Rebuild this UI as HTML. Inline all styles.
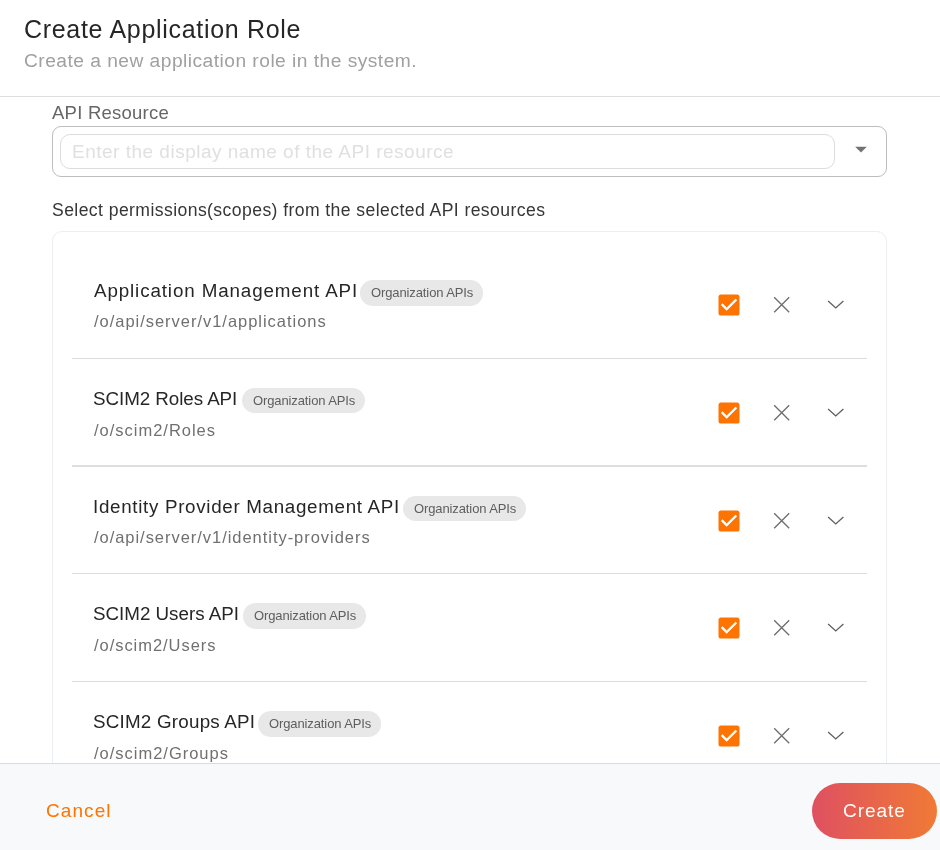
<!DOCTYPE html>
<html><head><meta charset="utf-8"><style>
html,body{margin:0;padding:0;background:#fff;width:940px;height:850px;overflow:hidden;}
body{position:relative;font-family:"Liberation Sans",sans-serif;}
.t{position:absolute;white-space:nowrap;line-height:1;will-change:transform;}
.abs{position:absolute;}
</style></head><body>
<div class="t" style="left:24.10px;top:17.35px;font-size:25.0px;letter-spacing:0.691px;color:#262626">Create Application Role</div>
<div class="t" style="left:23.50px;top:50.70px;font-size:19.2px;letter-spacing:0.474px;color:#a0a0a0">Create a new application role in the system.</div>
<div class="abs" style="left:0;top:96px;width:940px;height:1px;background:#dedede"></div>
<div class="t" style="left:52.30px;top:103.83px;font-size:18.5px;letter-spacing:0.236px;color:#666666">API Resource</div>
<div class="abs" style="left:52px;top:126px;width:833px;height:49px;border:1px solid #bdbdbd;border-radius:9px"></div>
<div class="abs" style="left:60px;top:134px;width:773px;height:33px;border:1px solid #dcdcdc;border-radius:10px"></div>
<div class="t" style="left:71.90px;top:142.00px;font-size:19.0px;letter-spacing:0.498px;color:#e0e0e0">Enter the display name of the API resource</div>
<svg class="abs" style="left:847px;top:135px" width="28" height="28" viewBox="0 0 24 24"><path d="M7 10l5 5 5-5z" fill="#737373"/></svg>
<div class="t" style="left:51.70px;top:202.20px;font-size:17.6px;letter-spacing:0.414px;color:#363636">Select permissions(scopes) from the selected API resources</div>
<div class="abs" style="left:52px;top:231px;width:833px;height:700px;border:1px solid #eceef0;border-radius:10px"></div>
<div class="abs" style="left:72px;top:358px;width:795px;height:1px;background:#dcdcdc"></div>
<div class="abs" style="left:72px;top:465px;width:795px;height:2px;background:#dedede"></div>
<div class="abs" style="left:72px;top:573px;width:795px;height:1px;background:#dcdcdc"></div>
<div class="abs" style="left:72px;top:681px;width:795px;height:1px;background:#dcdcdc"></div>
<div class="t" style="left:93.50px;top:281.92px;font-size:18.8px;letter-spacing:0.880px;color:#262626">Application Management API</div>
<div class="t" style="left:94.10px;top:313.00px;font-size:16.5px;letter-spacing:0.971px;color:#707070">/o/api/server/v1/applications</div>
<div class="abs" style="left:360px;top:280.20px;width:123px;height:25.5px;border-radius:12.75px;background:#e8e8e8"></div>
<div class="t" style="left:370.70px;top:286.05px;font-size:13.0px;letter-spacing:-0.112px;color:#5e5e5e">Organization APIs</div>
<svg class="abs" style="left:715px;top:290.50px" width="28" height="28" viewBox="0 0 24 24"><path fill="#ff7300" d="M19 3H5c-1.11 0-2 .9-2 2v14c0 1.1.89 2 2 2h14c1.11 0 2-.9 2-2V5c0-1.1-.89-2-2-2zm-9 14l-5-5 1.41-1.41L10 14.17l7.59-7.59L19 8l-9 9z"/></svg>
<svg class="abs" style="left:772px;top:295.00px" width="19" height="19" viewBox="0 0 19 19"><path d="M2.2 2.2 L17.2 17.2 M17.2 2.2 L2.2 17.2" stroke="#6e6e6e" stroke-width="1.35" fill="none"/></svg>
<svg class="abs" style="left:826px;top:298.00px" width="19" height="12" viewBox="0 0 19 12"><path d="M2.1 3 L9.75 9.9 L17.4 3" stroke="#5e5e5e" stroke-width="1.3" fill="none"/></svg>
<div class="t" style="left:92.50px;top:389.60px;font-size:18.8px;letter-spacing:-0.057px;color:#262626">SCIM2 Roles API</div>
<div class="t" style="left:94.10px;top:421.65px;font-size:16.5px;letter-spacing:0.985px;color:#707070">/o/scim2/Roles</div>
<div class="abs" style="left:242px;top:387.95px;width:123px;height:25.5px;border-radius:12.75px;background:#e8e8e8"></div>
<div class="t" style="left:252.70px;top:393.80px;font-size:13.0px;letter-spacing:-0.112px;color:#5e5e5e">Organization APIs</div>
<svg class="abs" style="left:715px;top:398.50px" width="28" height="28" viewBox="0 0 24 24"><path fill="#ff7300" d="M19 3H5c-1.11 0-2 .9-2 2v14c0 1.1.89 2 2 2h14c1.11 0 2-.9 2-2V5c0-1.1-.89-2-2-2zm-9 14l-5-5 1.41-1.41L10 14.17l7.59-7.59L19 8l-9 9z"/></svg>
<svg class="abs" style="left:772px;top:403.00px" width="19" height="19" viewBox="0 0 19 19"><path d="M2.2 2.2 L17.2 17.2 M17.2 2.2 L2.2 17.2" stroke="#6e6e6e" stroke-width="1.35" fill="none"/></svg>
<svg class="abs" style="left:826px;top:406.00px" width="19" height="12" viewBox="0 0 19 12"><path d="M2.1 3 L9.75 9.9 L17.4 3" stroke="#5e5e5e" stroke-width="1.3" fill="none"/></svg>
<div class="t" style="left:92.50px;top:497.75px;font-size:18.8px;letter-spacing:0.684px;color:#262626">Identity Provider Management API</div>
<div class="t" style="left:94.10px;top:529.45px;font-size:16.5px;letter-spacing:0.959px;color:#707070">/o/api/server/v1/identity-providers</div>
<div class="abs" style="left:403px;top:495.70px;width:123px;height:25.5px;border-radius:12.75px;background:#e8e8e8"></div>
<div class="t" style="left:413.70px;top:501.55px;font-size:13.0px;letter-spacing:-0.112px;color:#5e5e5e">Organization APIs</div>
<svg class="abs" style="left:715px;top:506.50px" width="28" height="28" viewBox="0 0 24 24"><path fill="#ff7300" d="M19 3H5c-1.11 0-2 .9-2 2v14c0 1.1.89 2 2 2h14c1.11 0 2-.9 2-2V5c0-1.1-.89-2-2-2zm-9 14l-5-5 1.41-1.41L10 14.17l7.59-7.59L19 8l-9 9z"/></svg>
<svg class="abs" style="left:772px;top:511.00px" width="19" height="19" viewBox="0 0 19 19"><path d="M2.2 2.2 L17.2 17.2 M17.2 2.2 L2.2 17.2" stroke="#6e6e6e" stroke-width="1.35" fill="none"/></svg>
<svg class="abs" style="left:826px;top:514.00px" width="19" height="12" viewBox="0 0 19 12"><path d="M2.1 3 L9.75 9.9 L17.4 3" stroke="#5e5e5e" stroke-width="1.3" fill="none"/></svg>
<div class="t" style="left:92.50px;top:604.60px;font-size:18.8px;letter-spacing:-0.014px;color:#262626">SCIM2 Users API</div>
<div class="t" style="left:94.10px;top:637.10px;font-size:16.5px;letter-spacing:0.954px;color:#707070">/o/scim2/Users</div>
<div class="abs" style="left:243px;top:603.45px;width:123px;height:25.5px;border-radius:12.75px;background:#e8e8e8"></div>
<div class="t" style="left:253.70px;top:609.30px;font-size:13.0px;letter-spacing:-0.112px;color:#5e5e5e">Organization APIs</div>
<svg class="abs" style="left:715px;top:613.50px" width="28" height="28" viewBox="0 0 24 24"><path fill="#ff7300" d="M19 3H5c-1.11 0-2 .9-2 2v14c0 1.1.89 2 2 2h14c1.11 0 2-.9 2-2V5c0-1.1-.89-2-2-2zm-9 14l-5-5 1.41-1.41L10 14.17l7.59-7.59L19 8l-9 9z"/></svg>
<svg class="abs" style="left:772px;top:618.00px" width="19" height="19" viewBox="0 0 19 19"><path d="M2.2 2.2 L17.2 17.2 M17.2 2.2 L2.2 17.2" stroke="#6e6e6e" stroke-width="1.35" fill="none"/></svg>
<svg class="abs" style="left:826px;top:621.00px" width="19" height="12" viewBox="0 0 19 12"><path d="M2.1 3 L9.75 9.9 L17.4 3" stroke="#5e5e5e" stroke-width="1.3" fill="none"/></svg>
<div class="t" style="left:92.50px;top:712.60px;font-size:18.8px;letter-spacing:0.227px;color:#262626">SCIM2 Groups API</div>
<div class="t" style="left:94.10px;top:744.65px;font-size:16.5px;letter-spacing:0.986px;color:#707070">/o/scim2/Groups</div>
<div class="abs" style="left:258px;top:711.20px;width:123px;height:25.5px;border-radius:12.75px;background:#e8e8e8"></div>
<div class="t" style="left:268.70px;top:717.05px;font-size:13.0px;letter-spacing:-0.112px;color:#5e5e5e">Organization APIs</div>
<svg class="abs" style="left:715px;top:721.50px" width="28" height="28" viewBox="0 0 24 24"><path fill="#ff7300" d="M19 3H5c-1.11 0-2 .9-2 2v14c0 1.1.89 2 2 2h14c1.11 0 2-.9 2-2V5c0-1.1-.89-2-2-2zm-9 14l-5-5 1.41-1.41L10 14.17l7.59-7.59L19 8l-9 9z"/></svg>
<svg class="abs" style="left:772px;top:726.00px" width="19" height="19" viewBox="0 0 19 19"><path d="M2.2 2.2 L17.2 17.2 M17.2 2.2 L2.2 17.2" stroke="#6e6e6e" stroke-width="1.35" fill="none"/></svg>
<svg class="abs" style="left:826px;top:729.00px" width="19" height="12" viewBox="0 0 19 12"><path d="M2.1 3 L9.75 9.9 L17.4 3" stroke="#5e5e5e" stroke-width="1.3" fill="none"/></svg>
<div class="abs" style="left:0;top:763px;width:940px;height:87px;background:#f8f9fb;border-top:1px solid #dadbdd"></div>
<div class="t" style="left:46.20px;top:800.85px;font-size:19.0px;letter-spacing:1.080px;color:#ff7300">Cancel</div>
<div class="abs" style="left:812px;top:783px;width:125px;height:56px;border-radius:28px;background:linear-gradient(90deg,#df5061 0%,#f07a35 100%)"></div>
<div class="t" style="left:843.40px;top:800.80px;font-size:19.0px;letter-spacing:0.960px;color:#ffffff">Create</div>
</body></html>
